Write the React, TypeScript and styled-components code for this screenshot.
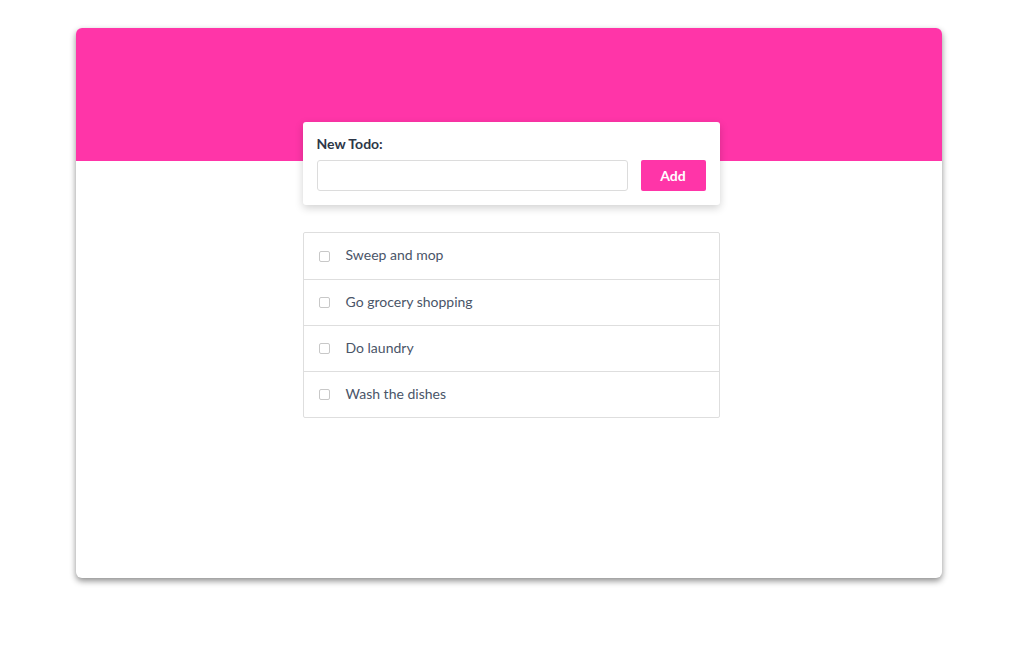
import React, { useState } from 'react';
import styled, { createGlobalStyle } from 'styled-components';

const pink = '#ff35a8';

const GlobalStyle = createGlobalStyle`
  html, body {
    margin: 0;
    padding: 0;
    background: #ffffff;
    font-family: Lato, "Noto Sans", sans-serif;
  }
  * { box-sizing: border-box; }
`;

const Page = styled.div`
  min-height: 652px;
  padding: 28px 76px 74px;
`;

const Frame = styled.div`
  height: 550px;
  background: #fff;
  border-radius: 6px;
  overflow: hidden;
  box-shadow: 0 3px 6px rgba(0, 0, 0, 0.45);
  display: flex;
  flex-direction: column;
`;

const Header = styled.div`
  height: 133px;
  flex-shrink: 0;
  background: ${pink};
`;

const Content = styled.div`
  width: 417px;
  margin: -39px auto 0;
  position: relative;
  left: 2px;
  display: flex;
  flex-direction: column;
  gap: 27px;
`;

const FormCard = styled.form`
  background: #fff;
  border-radius: 3px;
  padding: 14px;
  box-shadow: 0 3px 8px rgba(0, 0, 0, 0.18);
  display: flex;
  flex-direction: column;
  gap: 8px;
`;

const Label = styled.label`
  font-size: 14px;
  font-weight: 700;
  color: #2d3748;
  line-height: 16px;
`;

const FormRow = styled.div`
  display: flex;
  gap: 13px;
`;

const Input = styled.input`
  flex: 1;
  height: 31px;
  border: 1px solid #dcdcdc;
  border-radius: 3px;
  padding: 0 8px;
  font: inherit;
  font-size: 14px;
  outline: none;
`;

const AddButton = styled.button`
  width: 65px;
  height: 31px;
  border: none;
  border-radius: 2px;
  background: ${pink};
  color: #fff;
  font-family: inherit;
  font-weight: 700;
  font-size: 14px;
  cursor: pointer;
`;

const List = styled.ul`
  list-style: none;
  margin: 0;
  padding: 0;
  border: 1px solid #dedede;
  border-radius: 2px;
`;

const Item = styled.li`
  height: 46px;
  display: flex;
  align-items: center;
  padding-left: 15px;
  gap: 16px;
  font-size: 14px;
  line-height: 16px;
  color: #4a5568;
  & + & {
    border-top: 1px solid #dedede;
  }
`;

const ItemText = styled.span`
  margin-top: -2px;
`;

const Check = styled.span<{ $done: boolean }>`
  width: 11px;
  height: 11px;
  border: 1px solid #c8c8c8;
  border-radius: 2px;
  background: ${(p) => (p.$done ? pink : '#fff')};
  cursor: pointer;
`;

const initial = ['Sweep and mop', 'Go grocery shopping', 'Do laundry', 'Wash the dishes'];

export default function App() {
  const [todos, setTodos] = useState(initial.map((text) => ({ text, done: false })));
  const [value, setValue] = useState('');

  const add = (e: React.FormEvent) => {
    e.preventDefault();
    if (!value.trim()) return;
    setTodos([...todos, { text: value.trim(), done: false }]);
    setValue('');
  };

  return (
    <>
      <GlobalStyle />
      <Page>
        <Frame>
          <Header />
          <Content>
            <FormCard onSubmit={add}>
              <Label htmlFor="new-todo">New Todo:</Label>
              <FormRow>
                <Input id="new-todo" value={value} onChange={(e) => setValue(e.target.value)} />
                <AddButton type="submit">Add</AddButton>
              </FormRow>
            </FormCard>
            <List>
              {todos.map((t, i) => (
                <Item key={i}>
                  <Check
                    $done={t.done}
                    onClick={() =>
                      setTodos(todos.map((x, j) => (j === i ? { ...x, done: !x.done } : x)))
                    }
                  />
                  <ItemText>{t.text}</ItemText>
                </Item>
              ))}
            </List>
          </Content>
        </Frame>
      </Page>
    </>
  );
}
